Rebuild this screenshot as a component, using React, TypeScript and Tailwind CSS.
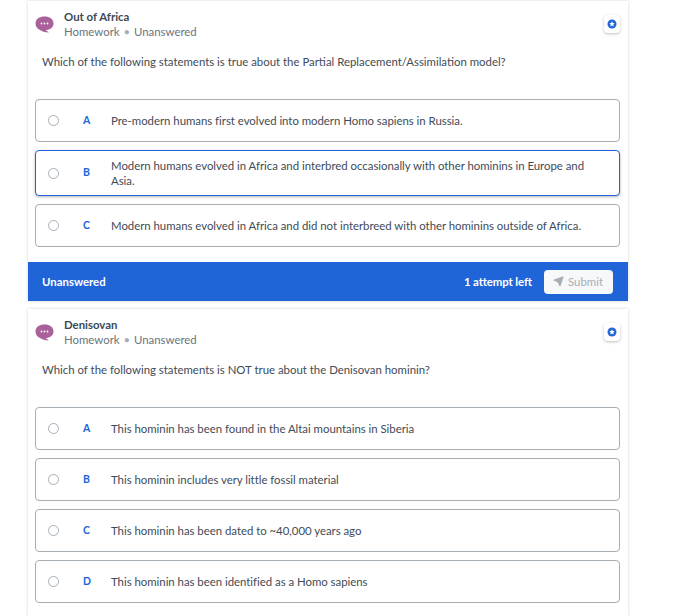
import { Send } from "lucide-react";

type OptionProps = {
    letter: string
    text: string
    focused?: boolean
}

type QuestionProps = {
    title: string
    prompt: string
    options: OptionProps[]
    footer?: boolean
}

const questions: QuestionProps[] = [
    {
        title: "Out of Africa",
        prompt: "Which of the following statements is true about the Partial Replacement/Assimilation model?",
        footer: true,
        options: [
            { letter: "A", text: "Pre-modern humans first evolved into modern Homo sapiens in Russia." },
            { letter: "B", text: "Modern humans evolved in Africa and interbred occasionally with other hominins in Europe and Asia.", focused: true },
            { letter: "C", text: "Modern humans evolved in Africa and did not interbreed with other hominins outside of Africa." },
        ],
    },
    {
        title: "Denisovan",
        prompt: "Which of the following statements is NOT true about the Denisovan hominin?",
        options: [
            { letter: "A", text: "This hominin has been found in the Altai mountains in Siberia" },
            { letter: "B", text: "This hominin includes very little fossil material" },
            { letter: "C", text: "This hominin has been dated to ~40,000 years ago" },
            { letter: "D", text: "This hominin has been identified as a Homo sapiens" },
        ],
    },
]

const ChatIcon = () => (
    <svg width="19" height="17" viewBox="0 0 19 17" className="shrink-0">
        <path d="M9.5 0.5C14.5 0.5 18.5 3 18.5 7.5C18.5 11.5 15 14 10.5 14L14 16.5C10 16.5 6.5 15 5 14C2.5 13 0.5 10.5 0.5 7.5C0.5 3 4.5 0.5 9.5 0.5Z" fill="#a9609b" />
        <circle cx="6.5" cy="7.5" r="0.9" fill="#fff" />
        <circle cx="9.5" cy="7.5" r="0.9" fill="#fff" />
        <circle cx="12.5" cy="7.5" r="0.9" fill="#fff" />
    </svg>
)

const BookmarkButton = () => (
    <div className="w-4 h-[18px] mt-[14px] bg-white rounded-sm shadow-[0_1px_3px_rgba(0,0,0,0.25)] flex items-center justify-center">
        <svg width="10" height="10" viewBox="0 0 10 10">
            <circle cx="5" cy="5" r="4.5" fill="#2065d8" />
            <path d="M5 2.3L5.8 4.1L7.7 4.3L6.3 5.5L6.7 7.4L5 6.4L3.3 7.4L3.7 5.5L2.3 4.3L4.2 4.1Z" fill="#fff" />
        </svg>
    </div>
)

const Option = ({ letter, text, focused }: OptionProps) => (
    <div className={`flex items-center rounded border bg-white pl-3 pr-6 py-[7px] min-h-[43px] ${focused ? "border-[#2065d8] shadow-[0_1px_3px_rgba(0,0,0,0.3)]" : "border-[#a7afb6]"}`}>
        <span className="w-[11px] h-[11px] rounded-full border border-[#a7afb6] shrink-0" />
        <span className="w-[28px] ml-6 shrink-0 font-bold text-[#2065d8] text-[10.5px]">{letter}</span>
        <span className="leading-[15px] tracking-[-0.02px]">{text}</span>
    </div>
)

const Question = ({ title, prompt, options, footer }: QuestionProps) => (
    <div className="bg-white shadow-[0_0_3px_rgba(0,0,0,0.18)]">
        <div className="flex justify-between pl-[7px] pr-2">
            <div className="flex items-center gap-[10px] pt-2">
                <ChatIcon />
                <div className="leading-[15px]">
                    <div className="font-bold text-[#3c4a56]">{title}</div>
                    <div className="text-[#6a747d]">Homework <span className="text-[#a7afb6] mx-px">•</span> Unanswered</div>
                </div>
            </div>
            <BookmarkButton />
        </div>
        <p className="ml-[14px] mt-[15px] leading-[15px]">{prompt}</p>
        <div className={`flex flex-col gap-2 ml-[7px] mr-2 mt-[30px] ${footer ? "pb-[15px]" : "pb-[13px]"}`}>
            {options.map((option) => <Option key={option.letter} {...option} />)}
        </div>
        {footer && (
            <div className="flex items-center justify-between h-[39px] bg-[#2065d8] pl-[14px] pr-[15px] text-white font-bold">
                <span>Unanswered</span>
                <div className="flex items-center gap-3">
                    <span className="tracking-[-0.01em]">1 attempt left</span>
                    <span className="flex items-center gap-1 h-6 pl-[9px] pr-[9px] w-[69px] rounded-sm bg-[#f7f8f9] text-[#a7afb6] font-normal">
                        <Send size={11} fill="#a7afb6" />
                        Submit
                    </span>
                </div>
            </div>
        )}
    </div>
)

const App = () => {
    return (
        <div className="w-[675px] h-[616px] overflow-hidden bg-white pt-px pl-[28px] font-['Lato',sans-serif] text-[11.4px] text-[#3f4b56]">
            <div className="flex flex-col gap-2 w-[600px]">
                {questions.map((question) => <Question key={question.title} {...question} />)}
            </div>
        </div>
    );
}

export default App;
